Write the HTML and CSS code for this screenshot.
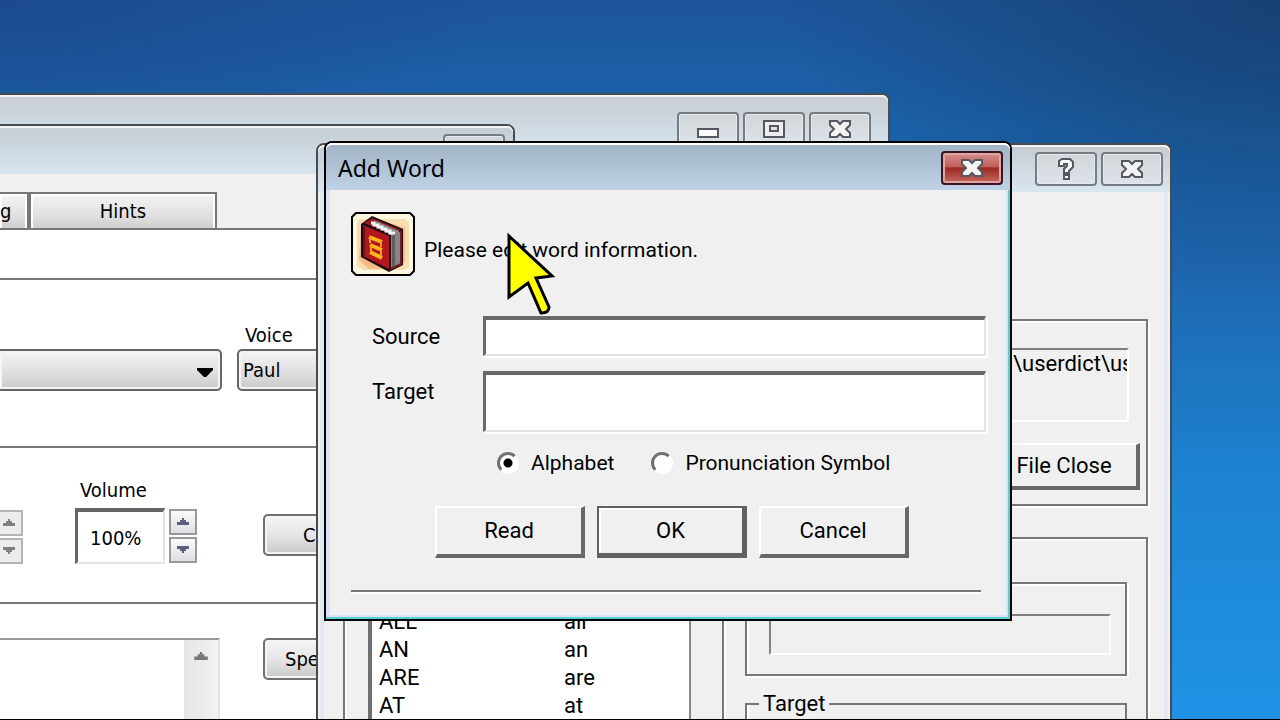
FILE: index.html
```html
<!DOCTYPE html>
<html lang="en">
<head>
    <meta charset="UTF-8">
    <title>Add Word</title>
    <link rel="stylesheet" href="styles.css">
</head>
<body>

<svg class="sprites" aria-hidden="true">
    <symbol id="icon-close" viewBox="0 0 24 20">
        <path d="M2 2h7l3 3 3-3h7v4l-4 4 4 4v4h-7l-3-3-3 3H2v-4l4-4-4-4z" fill="#f4f4f4" stroke="#55585e" stroke-width="2"/>
    </symbol>
    <symbol id="icon-max" viewBox="0 0 24 20">
        <path d="M2 2h20v16H2z" fill="#eceef0" stroke="#55585e" stroke-width="2"/>
        <path d="M8 7h8v5H8z" fill="#dfe2e5" stroke="#55585e" stroke-width="2"/>
    </symbol>
    <symbol id="icon-min" viewBox="0 0 24 20">
        <path d="M2 10h20v8H2z" fill="#fafafa" stroke="#55585e" stroke-width="2"/>
    </symbol>
    <symbol id="icon-help" viewBox="0 0 18 24">
        <path d="M2 8V4l3-2h8l3 3v5l-4 4v2H7v-4l3-3V7H7v2H2zM7 18h5v4H7z" fill="#fafafa" stroke="#55585e" stroke-width="2"/>
    </symbol>
    <symbol id="icon-up" viewBox="0 0 12 8"><path d="M5 0h2v2h2v2h3v3H0V4h3V2h2z" fill="currentColor"/></symbol>
    <symbol id="icon-down" viewBox="0 0 12 8"><path d="M0 0h12v3H9v2H7v2H5V5H3V3H0z" fill="currentColor"/></symbol>
</svg>

<div class="desktop">

    <!-- main window -->
    <section class="window window-main">
        <header class="title-bar">
            <button class="caption" aria-label="Minimize"><svg width="24" height="20"><use href="#icon-min"/></svg></button>
            <button class="caption" aria-label="Maximize"><svg width="24" height="20"><use href="#icon-max"/></svg></button>
            <button class="caption" aria-label="Close"><svg width="24" height="20"><use href="#icon-close"/></svg></button>
        </header>
    </section>

    <!-- voice settings -->
    <section class="window window-settings">
        <header class="title-bar"><button class="caption" aria-label="Close settings"></button></header>
        <div class="settings-body">
            <nav class="tabs">
                <button class="tab tab-cut">g</button>
                <button class="tab">Hints</button>
            </nav>
            <div class="panel panel-top"></div>
            <div class="panel panel-voice">
                <div class="select-wrap">
                    <select class="select wide" aria-label="Language"><option></option></select>
                    <svg class="select-arrow" width="16" height="9" viewBox="0 0 16 9"><path d="M0 0h16v2L9 9H7L0 2z"/></svg>
                </div>
                <div class="voice">
                    <label for="voice">Voice</label>
                    <select class="select" id="voice"><option>Paul</option></select>
                </div>
            </div>
            <div class="panel panel-volume">
                <div class="spinner disabled">
                    <button disabled aria-label="Up"><svg width="12" height="8"><use href="#icon-up"/></svg></button>
                    <button disabled aria-label="Down"><svg width="12" height="8"><use href="#icon-down"/></svg></button>
                </div>
                <div class="volume">
                    <label for="volume">Volume</label>
                    <div class="volume-row">
                        <input id="volume" type="text" value="100%">
                        <div class="spinner">
                            <button aria-label="Volume up"><svg width="12" height="8"><use href="#icon-up"/></svg></button>
                            <button aria-label="Volume down"><svg width="12" height="8"><use href="#icon-down"/></svg></button>
                        </div>
                    </div>
                </div>
                <button class="soft-button soft-late">C</button>
            </div>
            <div class="panel panel-text">
                <div class="text-box">
                    <div class="scroll"><svg width="16" height="9"><use href="#icon-up"/></svg></div>
                </div>
                <button class="soft-button">Spe</button>
            </div>
        </div>
    </section>

    <!-- user dictionary -->
    <section class="window window-dict">
        <header class="title-bar">
            <button class="caption" aria-label="Help"><svg width="18" height="24"><use href="#icon-help"/></svg></button>
            <button class="caption" aria-label="Close dictionary"><svg width="24" height="20"><use href="#icon-close"/></svg></button>
        </header>
        <div class="dict-body">
            <div class="group file-group">
                <div class="sunken path">\userdict\us</div>
                <button class="button">File Close</button>
            </div>
            <div class="group words-group">
                <div class="list-side">
                    <div class="list">
                        <table>
                            <tr><td>ALL</td><td>all</td></tr>
                            <tr><td>AN</td><td>an</td></tr>
                            <tr><td>ARE</td><td>are</td></tr>
                            <tr><td>AT</td><td>at</td></tr>
                        </table>
                    </div>
                </div>
                <div class="word-side">
                    <div class="group source-group"><div class="sunken"></div></div>
                    <fieldset class="target-group">
                        <legend>Target</legend>
                    </fieldset>
                </div>
            </div>
        </div>
    </section>

    <!-- add word dialog -->
    <section class="window-dialog" role="dialog" aria-labelledby="dialog-title">
        <header class="dialog-title">
            <h1 id="dialog-title">Add Word</h1>
            <button class="caption caption-red" aria-label="Close dialog"><svg width="24" height="20"><use href="#icon-close"/></svg></button>
        </header>
        <form class="dialog-body">
            <div class="intro">
                <svg class="book" width="64" height="64" viewBox="0 0 64 64">
                    <path d="M5 1h54l4 4v54l-4 4H5l-4-4V5z" fill="#fff8df" stroke="#000" stroke-width="2"/>
                    <path d="M8 7h46l4 4v44l-6 3H12l-6-4V12z" fill="#f9dcb0"/>
                    <path d="M10 12L30 8l24 8v34l-8 6-28 1-10-9z" fill="#f4ba86"/>
                    <path d="M10 12l11-8 31 13v36l-14 7-28-15z" fill="#1c0a12"/>
                    <path d="M13 11l8-5 29 12-9 5z" fill="#941c22"/>
                    <path d="M20 11l5-2 23 10v2l-7 3z" fill="#888"/>
                    <path d="M20 11h3v2h4v2h4v2h4v2h4v2h5" fill="none" stroke="#f4f4f4" stroke-width="3"/>
                    <path d="M40 24l9-4v32l-9 4z" fill="#858585"/>
                    <path d="M41 24l3-1v31l-3 1z" fill="#5d5d5d"/>
                    <path d="M50 19v33l-12 6" fill="none" stroke="#7c1820" stroke-width="2"/>
                    <path d="M12 13l26 11v33L12 44z" fill="#b3161d"/>
                    <path d="M13 14v30" stroke="#6e1017" stroke-width="2"/>
                    <path d="M39 25v33" stroke="#2a0b12" stroke-width="2"/>
                    <path d="M18 25l13 5M19 33l12 5M19 40l12 6" fill="none" stroke="#ffb51c" stroke-width="4"/>
                    <path d="M19 25v6M30 29v6M20 34v6M30 38v6" fill="none" stroke="#f29a1a" stroke-width="2"/>
                </svg>
                <p>Please edit word information.</p>
            </div>
            <div class="fields">
                <label for="source">Source</label>
                <input id="source" type="text">
                <label for="target">Target</label>
                <textarea id="target"></textarea>
            </div>
            <div class="modes">
                <label class="mode"><input type="radio" name="mode" checked>Alphabet</label>
                <label class="mode"><input type="radio" name="mode">Pronunciation Symbol</label>
            </div>
            <div class="actions">
                <button type="button" class="button">Read</button>
                <button type="submit" class="button button-default">OK</button>
                <button type="button" class="button">Cancel</button>
            </div>
            <hr>
        </form>
    </section>

    <svg class="pointer" width="50" height="84" viewBox="0 0 50 84">
        <path d="M3 4L46 44 30 46 43 75Q43 81 35 81L22 51 3 65z" fill="#ff0" stroke="#000" stroke-width="3"/>
    </svg>
</div>

</body>
</html>
```
FILE: styles.css
```css
* {
    box-sizing: border-box;
}
body {
    margin: 0;
    font-family: Roboto, "Liberation Sans", sans-serif;
    font-size: 22px;
    line-height: 28px;
    color: #000;
}
button, input, select, textarea {
    font: inherit;
    color: inherit;
    margin: 0;
    padding: 0;
    border-radius: 0;
}
p, h1 {
    margin: 0;
}
.sprites {
    display: none;
}
.desktop {
    position: relative;
    height: 100vh;
    overflow: hidden;
    border-bottom: 1px solid #000;
    background:
        radial-gradient(ellipse 500px 300px at 100% 0, #164275, rgba(22, 66, 117, 0)),
        radial-gradient(ellipse 500px 160px at 0 0, #1b4b8e, rgba(27, 75, 142, 0)),
        linear-gradient(180deg, #1d5499, #1b65ae 130px, #1e68b0 280px, #1d83d2 480px, #2092e5);
}

/* windows */
.window {
    position: absolute;
    border: 2px solid #484b4f;
    border-radius: 8px 8px 0 0;
    background: #e2e9f1;
    box-shadow: inset 0 2px 0 #f2f4f6, inset -2px 0 0 #edf1f4, inset 2px 0 0 #edf1f4;
}
.title-bar {
    display: flex;
    justify-content: flex-end;
    gap: 4px;
    height: 46px;
    padding: 6px 6px 0;
    border-radius: 6px 6px 0 0;
    background: linear-gradient(#c6ccd2, #d9e6f0);
    box-shadow: inset 0 2px 0 #f2f4f6;
}
.caption {
    display: flex;
    align-items: center;
    justify-content: center;
    width: 62px;
    height: 34px;
    border: 2px solid #777b82;
    border-radius: 4px;
    background: linear-gradient(#d2d6da, #dde4ea);
    box-shadow: inset 0 0 0 1px #e6eaee;
}
.window-main {
    top: 93px;
    left: -8px;
    width: 898px;
    bottom: -10px;
}
.window-main .title-bar {
    padding: 17px 17px 0;
    height: 60px;
}
.window-settings {
    top: 124px;
    left: -8px;
    width: 523px;
    bottom: -10px;
    font-family: "DejaVu Sans Condensed", "Noto Sans", sans-serif;
    font-size: 20px;
}
.window-settings .title-bar {
    height: 48px;
    padding: 8px 8px 0;
    background: linear-gradient(#c6ccd2, #d6e4ef);
}
.window-dict {
    top: 143px;
    left: 316px;
    width: 856px;
    bottom: -10px;
}
.window-dict .title-bar {
    height: 47px;
    padding: 7px 7px 0;
}

/* settings */
.settings-body {
    padding: 18px 0 0 6px;
    background: #f0f0f0;
}
.tabs {
    display: flex;
    height: 36px;
}
.tab {
    width: 188px;
    border: 2px solid #777;
    border-bottom: 0;
    background: linear-gradient(#f4f4f4, #e2e2e2 60%, #cfcfcf);
    box-shadow: inset 2px 2px 0 #fff, inset -2px 0 0 #fff;
}
.tab-cut {
    width: 29px;
    border-left: 0;
    padding-right: 18px;
}
.panel {
    display: flex;
    border-top: 2px solid #777;
    background: #fff;
}
.panel-top {
    height: 50px;
}
.panel-voice {
    height: 168px;
    align-items: flex-start;
    gap: 15px;
    padding-top: 41px;
}
.select {
    appearance: none;
    display: block;
    width: 140px;
    height: 42px;
    padding: 0 4px;
    border: 2px solid #666;
    border-radius: 5px;
    background: linear-gradient(#f4f4f4, #e2e2e2 50%, #cbcbcb);
    box-shadow: inset 0 0 0 2px #f5f5f5;
}
.select-wrap {
    position: relative;
    padding-top: 28px;
}
.select.wide {
    width: 222px;
    border-left: 0;
    border-radius: 0 5px 5px 0;
}
.select-arrow {
    position: absolute;
    right: 9px;
    bottom: 14px;
}
.voice label {
    display: block;
    padding-left: 8px;
}
.panel-volume {
    height: 156px;
    align-items: flex-start;
    padding-top: 28px;
}
.spinner {
    display: grid;
    gap: 2px;
}
.spinner button {
    display: grid;
    place-items: center;
    width: 28px;
    height: 26px;
    border: 2px solid #999;
    background: linear-gradient(#fbfbfb, #dcdfe3);
    color: #5b6080;
}
.spinner.disabled {
    width: 23px;
    margin: 34px 52px 0 0;
    justify-content: end;
}
.spinner.disabled button {
    border-color: #b4b4b4;
    background: #ececec;
    color: #808080;
}
.volume label {
    padding-left: 5px;
}
.volume-row {
    display: flex;
    align-items: center;
    gap: 4px;
    margin-top: 4px;
}
.volume input {
    width: 90px;
    height: 56px;
    padding: 2px 0 0 12px;
    border: 2px solid #e4e4e4;
    border-top: 4px solid #666;
    border-left: 3px solid #666;
}
.soft-button {
    width: 120px;
    height: 42px;
    padding-left: 20px;
    border: 2px solid #707070;
    border-radius: 5px;
    background: linear-gradient(#f6f6f6, #e6e6e6 50%, #c8c8c8);
    box-shadow: inset 0 0 0 2px #f5f5f5;
    text-align: left;
}
.soft-late {
    margin: 38px 0 0 66px;
    padding-left: 38px;
}
.panel-text {
    height: 140px;
    gap: 43px;
    padding-top: 34px;
}
.text-box {
    display: flex;
    justify-content: flex-end;
    width: 220px;
    border-top: 2px solid #999;
    border-right: 2px solid #e2e2e2;
}
.scroll {
    width: 34px;
    text-align: center;
    background: linear-gradient(90deg, #e6e6e6, #f2f2f2);
    color: #777;
}

/* dictionary */
.dict-body {
    display: flex;
    flex-direction: column;
    gap: 31px;
    height: calc(100% - 47px);
    margin: 0 6px;
    padding: 127px 16px 0 19px;
    background: #f0f0f0;
}
.group {
    border: 2px solid #777;
    box-shadow: 2px 2px 0 #fff, inset 2px 2px 0 #fff;
}
.sunken {
    border: 2px solid #fff;
    border-top-color: #808080;
    border-left-color: #808080;
}
.file-group {
    display: flex;
    flex-direction: column;
    align-items: flex-end;
    gap: 21px;
    padding: 27px 6px 14px;
}
.path {
    width: 140px;
    height: 74px;
    margin-right: 11px;
    padding-left: 22px;
    overflow: hidden;
    white-space: nowrap;
}
.words-group {
    display: flex;
    flex: 1;
    border-bottom: 0;
}
.list-side {
    width: 379px;
    padding: 43px 31px 0 23px;
    border-right: 2px solid #777;
    box-shadow: 2px 0 0 #fff;
}
.list {
    height: 100%;
    padding: 26px 0 0 7px;
    border-left: 4px solid #707070;
    border-right: 2px solid #888;
    background: #fff;
}
table {
    border-collapse: collapse;
}
td {
    padding: 0;
}
td:first-child {
    width: 185px;
}
.word-side {
    flex: 1;
    padding: 43px 19px 0 21px;
}
.source-group {
    height: 94px;
    padding: 30px 14px 0 22px;
}
.source-group .sunken {
    height: 41px;
}
.target-group {
    height: 80px;
    margin: 14px 0 0;
    padding: 0 12px;
    border: 2px solid #777;
    box-shadow: inset 2px 0 0 #fff;
}
legend {
    padding: 0 4px;
}

/* dialog */
.window-dialog {
    position: absolute;
    top: 141px;
    left: 324px;
    width: 688px;
    border: 2px solid #000;
    border-radius: 8px 8px 0 0;
    background: #d8e4f4;
    box-shadow: inset -2px -2px 0 #58cfd2;
}
.dialog-title {
    display: flex;
    align-items: center;
    justify-content: space-between;
    height: 47px;
    padding: 2px 7px 0 12px;
    border-radius: 6px 6px 0 0;
    background: linear-gradient(#9fb3c5, #c0d2e6);
    box-shadow: inset 0 2px 0 #fff;
}
.dialog-title h1 {
    font-family: "Noto Sans", sans-serif;
    font-size: 23px;
    font-weight: normal;
}
.caption-red {
    border-color: #3a1420;
    background: linear-gradient(#d69090, #c25f5c 45%, #9c2a25 50%, #c46a60);
    box-shadow: inset 0 0 0 2px #dfa5a3;
}
.dialog-body {
    margin: 0 4px 4px;
    padding: 22px 20px 21px 21px;
    background: #f0f0f0;
}
.intro {
    display: flex;
    align-items: center;
    gap: 9px;
    font-size: 21px;
}
.intro p {
    padding-top: 12px;
}
.fields {
    display: grid;
    grid-template-columns: 111px 1fr;
    gap: 15px 0;
    margin-top: 40px;
    padding-left: 21px;
}
.fields label {
    padding-top: 7px;
}
.fields input, .fields textarea {
    display: block;
    width: 100%;
    height: 40px;
    border: 2px solid #e3e3e3;
    border-top: 4px solid #686868;
    border-left: 3px solid #686868;
    background: #fff;
    box-shadow: 2px 2px 0 #fff;
    resize: none;
}
.fields textarea {
    height: 61px;
}
.modes {
    display: flex;
    gap: 37px;
    margin-top: 17px;
    padding-left: 146px;
    font-size: 21px;
}
.mode {
    display: flex;
    align-items: center;
    gap: 12px;
}
.mode input {
    appearance: none;
    width: 22px;
    height: 22px;
    border: 3px solid #fff;
    border-top-color: #707070;
    border-left-color: #707070;
    border-radius: 50%;
    background: #fff;
}
.mode input:checked {
    background: radial-gradient(circle, #000 4px, #fff 5px);
}
.actions {
    display: flex;
    gap: 12px;
    margin-top: 29px;
    padding-left: 84px;
}
.button {
    width: 150px;
    height: 52px;
    border: 2px solid #fff;
    border-right: 4px solid #686868;
    border-bottom: 4px solid #686868;
    background: #f0f0f0;
}
.file-group .button {
    height: 47px;
}
.button-default {
    border: 2px solid #606060;
    border-right-width: 5px;
    border-bottom-width: 5px;
    box-shadow: inset 2px 2px 0 #fff;
}
hr {
    margin: 32px 5px 0 0;
    border: 0;
    border-top: 2px solid #777;
    border-bottom: 2px solid #fff;
}
.pointer {
    position: absolute;
    top: 232px;
    left: 506px;
}
```
